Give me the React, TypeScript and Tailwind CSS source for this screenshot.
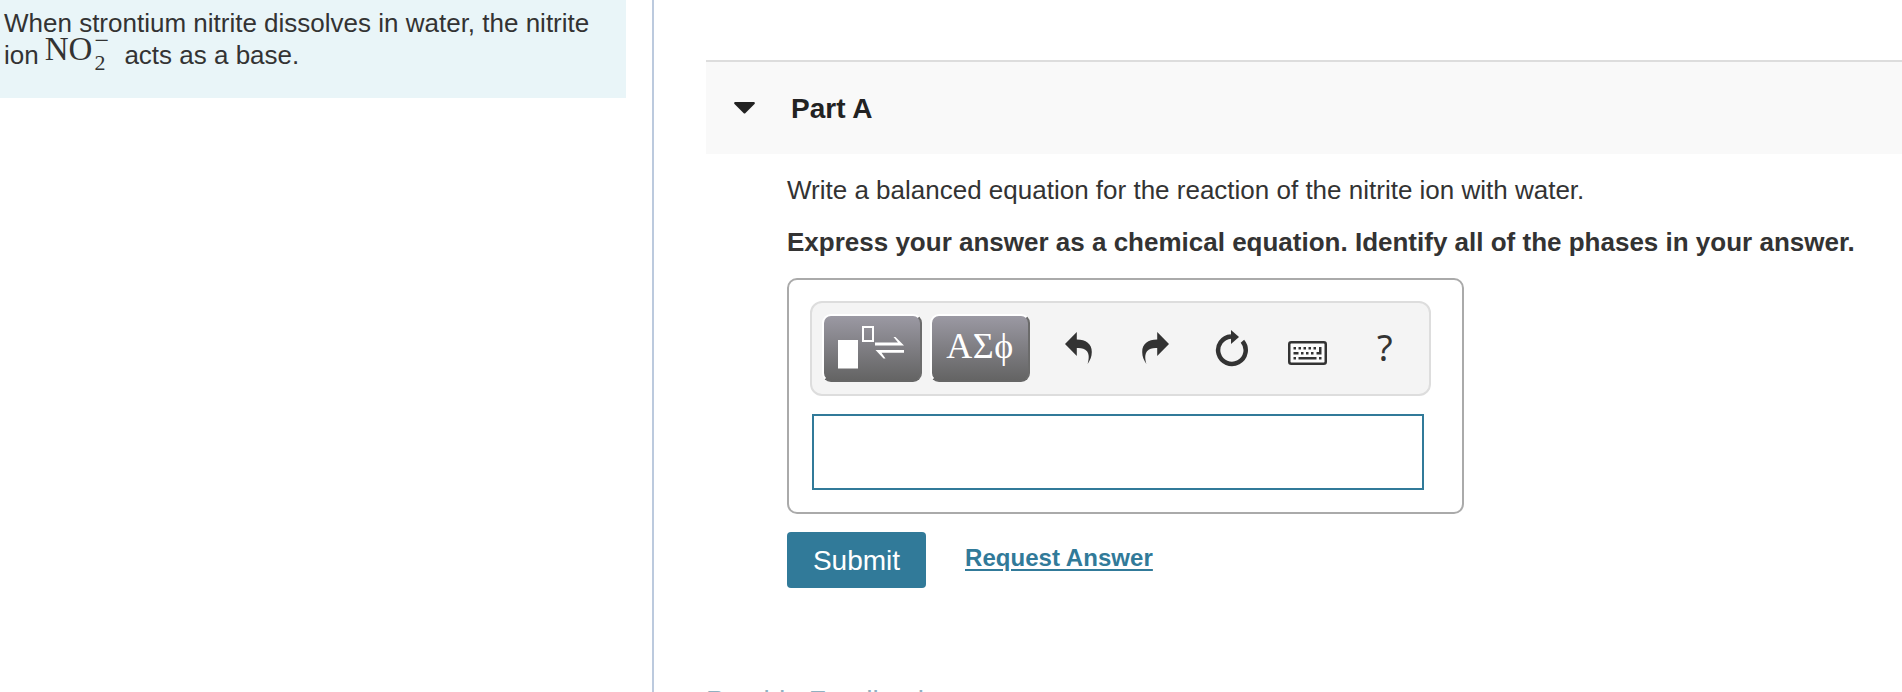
import React, { useState } from 'react';

interface ToolButtonProps {
  label: string;
  onClick?: () => void;
  className?: string;
  children: React.ReactNode;
}

const ArrowIcon: React.FC<{ flipped?: boolean }> = ({ flipped }) => (
  <svg width="27" height="32" viewBox="0 0 27 32" className={flipped ? '-scale-x-100' : ''}>
    <path
      d="M0 12 L11.8 0 V7.6 C21 7.6 26.8 12 26.8 20 C26.8 25 25 28.5 22.6 32 C24.2 26 24.2 22.5 22 19.2 C19.5 16.2 16 15.8 11.8 16 V24 Z"
      fill="#333"
    />
  </svg>
);

const ResetIcon = () => (
  <svg width="34" height="37" viewBox="0 0 34 37">
    <path d="M27.4 11.2 A13.8 13.8 0 1 1 16 6.4" fill="none" stroke="#333" strokeWidth="4.5" />
    <path d="M16 0 L24 7 L16 14 Z" fill="#333" />
  </svg>
);

const KeyboardIcon = () => (
  <svg width="39" height="24" viewBox="0 0 39 24">
    <rect x="1.25" y="1.25" width="36.5" height="21.5" rx="2" fill="#fcfcfc" stroke="#333" strokeWidth="2.5" />
    <path
      d="M5.5 6h2.5v2.5h-2.5z M10.5 6h2.5v2.5h-2.5z M15.5 6h2.5v2.5h-2.5z M20.5 6h2.5v2.5h-2.5z M25.5 6h2.5v2.5h-2.5z M31 6h2.5v7.5h-5v-2.5h2.5z M5.5 11h5v2.5h-5z M13 11h2.5v2.5h-2.5z M18 11h2.5v2.5h-2.5z M23 11h2.5v2.5h-2.5z M5.5 16h2.5v2.5h-2.5z M10.5 16h18v2.5h-18z M31 16h2.5v2.5h-2.5z"
      fill="#333"
    />
  </svg>
);

// Filled block, superscript box and equilibrium arrows
const TemplateIcon = () => (
  <svg width="68" height="46" viewBox="0 0 68 46" fill="#fff">
    <rect x="0" y="15" width="20" height="28.5" />
    <rect x="25" y="2" width="10" height="14" fill="none" stroke="#fff" strokeWidth="2" />
    <path d="M37 17.5 H60 L55.5 12 L57.5 12 L66 20.5 H37 Z" />
    <path d="M66 27.8 H43.5 L47.5 33.5 L45.5 33.5 L37.5 25 H66 Z" />
  </svg>
);

const PaletteButton: React.FC<ToolButtonProps> = ({ label, className, children }) => (
  <button
    aria-label={label}
    className={`h-[68px] w-[100px] rounded-[9px] border-2 border-t-white border-l-white border-r-[#6b6b6b] border-b-[#666] bg-linear-to-b from-[#9b99a3] to-[#646464] text-white ${className ?? ''}`}
  >
    {children}
  </button>
);

const IconButton: React.FC<ToolButtonProps> = ({ label, onClick, className, children }) => (
  <button aria-label={label} onClick={onClick} className={`flex shrink-0 ${className ?? ''}`}>
    {children}
  </button>
);

const Introduction = () => (
  <div className="h-[98px] w-[626px] bg-[#e9f5f8] pt-[7px] pl-1 text-[26px] leading-8">
    <p className="whitespace-nowrap">When strontium nitrite dissolves in water, the nitrite</p>
    <div className="flex h-8 whitespace-nowrap">
      <span>ion</span>
      <span className="-mt-[6px] ml-[6px] flex font-['Liberation_Serif',serif] text-[33px]">
        NO
        <span className="ml-[2px] flex w-[24px] flex-col text-[22px]">
          <span className="-mt-[3px] text-[26px] leading-[22px]">−</span>
          <span className="leading-[22px]">2</span>
        </span>
      </span>
      <span className="ml-[6px]">acts as a base.</span>
    </div>
  </div>
);

const AnswerBox = () => {
  const [answer, setAnswer] = useState('');

  return (
    <div className="mt-5 h-[236px] w-[677px] rounded-[10px] border-2 border-[#aaa] pt-[21px] pl-[21px]">
      {/* Toolbar */}
      <div className="flex h-[95px] w-[621px] rounded-[12px] border-2 border-[#ddd] bg-[#f4f4f4] pt-[11px] pl-[10px]">
        <PaletteButton label="Templates" className="pl-[14px]">
          <TemplateIcon />
        </PaletteButton>
        <PaletteButton
          label="Symbols"
          className="ml-2 pb-[4px] font-['Liberation_Serif',serif] text-[36px] leading-[40px] tracking-[0.5px]"
        >
          ΑΣϕ
        </PaletteButton>
        <IconButton label="Undo" onClick={() => setAnswer('')} className="mt-[18px] ml-[35px] h-8">
          <ArrowIcon />
        </IconButton>
        <IconButton label="Redo" className="mt-[18px] ml-[50px] h-8">
          <ArrowIcon flipped />
        </IconButton>
        <IconButton label="Reset" onClick={() => setAnswer('')} className="mt-[16px] ml-[46px] h-[37px]">
          <ResetIcon />
        </IconButton>
        <IconButton label="Keyboard shortcuts" className="mt-[27px] ml-[39px] h-6">
          <KeyboardIcon />
        </IconButton>
        <IconButton
          label="Help"
          className="mt-[14px] ml-[50px] font-['Noto_Sans',sans-serif] text-[36px] leading-[40px]"
        >
          ?
        </IconButton>
      </div>
      <input
        value={answer}
        onChange={(e) => setAnswer(e.target.value)}
        className="mt-[18px] ml-[2px] block h-[76px] w-[612px] border-2 border-[#317a99] px-3 outline-none"
      />
    </div>
  );
};

export default function App() {
  return (
    <div className="flex h-[692px] overflow-hidden bg-white font-['Liberation_Sans',Arial,sans-serif] text-[#333]">
      <aside className="w-[654px] shrink-0 border-r-2 border-[#bccade]">
        <Introduction />
      </aside>

      <main className="min-w-0 flex-1 pt-[60px] pl-[52px]">
        <div className="flex h-[94px] items-center border-t-2 border-[#ddd] bg-[#f9f9f9] pl-7 text-[#222]">
          <svg width="21" height="12" viewBox="0 0 21 12">
            <path d="M1 0 H20 Q21.5 0.5 20.5 2 L11.5 11 Q10.5 12 9.5 11 L0.5 2 Q-0.5 0.5 1 0 Z" fill="#222" />
          </svg>
          <h2 className="mt-[2px] ml-9 text-[28px] leading-8 font-bold">Part A</h2>
        </div>

        <div className="mt-5 pl-[81px] text-[26px] leading-8 whitespace-nowrap">
          <p>Write a balanced equation for the reaction of the nitrite ion with water.</p>
          <p className="mt-5 font-bold">
            Express your answer as a chemical equation. Identify all of the phases in your answer.
          </p>
          <AnswerBox />
          <div className="mt-[18px] flex items-center">
            <button className="h-14 w-[139px] rounded-[4px] bg-[#317a99] pt-[2px] text-[28px] text-white">
              Submit
            </button>
            <a
              href="#"
              className="mb-[5px] ml-[39px] text-[24px] font-bold tracking-[0.05px] text-[#317a99] underline decoration-2 underline-offset-[3px]"
            >
              Request Answer
            </a>
          </div>
        </div>

        <a href="#" className="mt-[97px] block text-[28px] leading-8 text-[#8fb0c0]">
          Provide Feedback
        </a>
      </main>
    </div>
  );
}
